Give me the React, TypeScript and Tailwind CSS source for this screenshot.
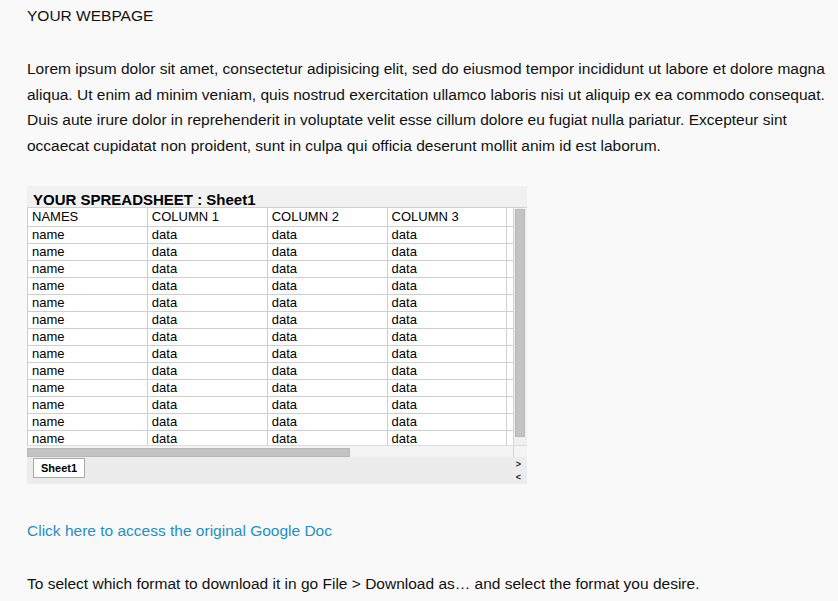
const rows = Array.from({ length: 13 }, () => ["name", "data", "data", "data"]);
const columns = ["NAMES", "COLUMN 1", "COLUMN 2", "COLUMN 3"];

function Spreadsheet() {
  return (
    <div className="mt-[27px] w-[500px] h-[298px] bg-[#ececec] flex flex-col">
      <div className="h-[22px] bg-[#f1f1f1] pl-[6px] pt-[5px] flex items-center text-[15px] font-bold leading-none text-black">
        YOUR SPREADSHEET : Sheet1
      </div>
      <div className="flex h-[238px] bg-white border-t border-[#d0d0d0]">
        <div className="w-[486px] overflow-hidden flex flex-col">
          <table className="border-collapse table-fixed text-[13px] leading-[16px] text-black">
            <tbody>
              <tr>
                {columns.map((c) => (
                  <td key={c} className="w-[120px] h-[18px] p-0 pl-[4px] pt-[1px] border border-t-0 border-[#cfcfcf] whitespace-nowrap">
                    {c}
                  </td>
                ))}
                <td className="w-[6px] p-0 border border-t-0 border-r-0 border-[#cfcfcf]" />
              </tr>
              {rows.map((r, i) => (
                <tr key={i}>
                  {r.map((v, j) => (
                    <td key={j} className="h-[16px] p-0 pl-[4px] border border-[#cfcfcf]">
                      {v}
                    </td>
                  ))}
                  <td className="p-0 border border-r-0 border-[#cfcfcf]" />
                </tr>
              ))}
            </tbody>
          </table>
        </div>
        <div className="flex-1 bg-white" />
        <div className="w-[14px] border-l border-[#d4d4d4] bg-[#f0f0f0] flex flex-col pt-[1px] pl-[1px]">
          <div className="w-[10px] h-[228px] bg-[#c3c3c3] border border-[#b8b8b8]" />
        </div>
      </div>
      <div className="flex h-[12px]">
        <div className="w-[486px] bg-[#f4f4f4] border-t border-[#dcdcdc] flex items-end">
          <div className="w-[323px] h-[9px] bg-[#c3c3c3] border border-[#b8b8b8]" />
        </div>
        <div className="flex-1 bg-[#f4f4f4] border-t border-[#dcdcdc] border-l border-l-[#d4d4d4]" />
      </div>
      <div className="flex-1 flex justify-between pl-[6px] pr-[6px]">
        <div className="mt-[1px] w-[52px] h-[20px] bg-white border border-[#a9a9a9] flex items-center justify-center text-[11px] font-bold text-black">
          Sheet1
        </div>
        <div className="flex flex-col text-[9px] font-bold leading-[13px] pt-[1px] text-[#222]">
          <span>&gt;</span>
          <span>&lt;</span>
        </div>
      </div>
    </div>
  );
}

export default function App() {
  return (
    <div className="min-h-[601px] bg-[#f9f9f9] pl-[27px] pr-[10px] pt-[6px] text-[#111] font-['Liberation_Sans',Arial,sans-serif]">
      <div className="text-[15.5px] leading-[20px]">YOUR WEBPAGE</div>
      <p className="mt-[30px] text-[15.5px] leading-[25.7px] w-[805px]">
        Lorem ipsum dolor sit amet, consectetur adipisicing elit, sed do eiusmod tempor incididunt ut labore et dolore magna
        aliqua. Ut enim ad minim veniam, quis nostrud exercitation ullamco laboris nisi ut aliquip ex ea commodo consequat.
        Duis aute irure dolor in reprehenderit in voluptate velit esse cillum dolore eu fugiat nulla pariatur. Excepteur sint
        occaecat cupidatat non proident, sunt in culpa qui officia deserunt mollit anim id est laborum.
      </p>
      <Spreadsheet />
      <a href="#" className="block mt-[34px] text-[15.5px] leading-[25.7px] text-[#1e90c8]">
        Click here to access the original Google Doc
      </a>
      <p className="mt-[27px] text-[15.5px] leading-[25.7px]">
        To select which format to download it in go File &gt; Download as… and select the format you desire.
      </p>
    </div>
  );
}
